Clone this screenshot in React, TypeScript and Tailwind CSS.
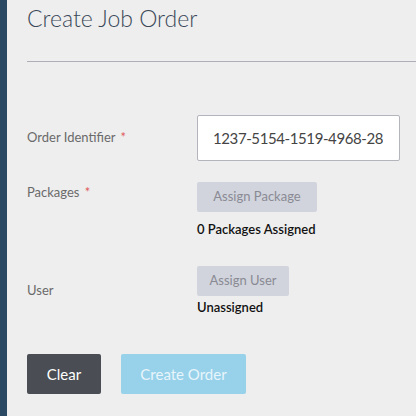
export default function App() {
  const font = { fontFamily: 'Lato, "Noto Sans", sans-serif' };
  return (
    <div className="flex w-[416px] h-[416px] bg-[#eeeeee] overflow-hidden" style={font}>
      <div className="w-[7px] shrink-0 bg-[#2a4861]" />
      <div className="flex-1 pl-[20px] flex flex-col">
        <h1 className="pt-[4px] text-[23px] leading-[28px] font-light text-[#3a4858]">Create Job Order</h1>
        <div className="mt-[29px] h-px bg-[#aeaeb6]" />
        <div className="mt-[53px] flex items-center">
          <div className="w-[170px] text-[13px] text-[#6a6a6a]">
            Order Identifier <span className="text-[#e05a5a] ml-[2px]">*</span>
          </div>
          <input
            readOnly
            value="1237-5154-1519-4968-2841"
            className="w-[203px] h-[46px] bg-white border border-[#b4b4bc] rounded-[2px] pl-[15px] pr-[16px] text-[15px] tracking-[-0.4px] text-[#444] outline-none"
            style={font}
          />
        </div>
        <div className="mt-[21px] flex items-start">
          <div className="w-[170px] text-[13px] leading-[20px] text-[#6a6a6a]">
            Packages <span className="text-[#e05a5a] ml-[2px]">*</span>
          </div>
          <div className="flex flex-col items-start">
            <button className="h-[30px] w-[120px] bg-[#d1d4dc] rounded-[2px] text-[13px] text-[#8a8a94]">Assign Package</button>
            <div className="mt-[8px] text-[13px] leading-[18px] font-semibold text-[#111]">0 Packages Assigned</div>
          </div>
        </div>
        <div className="mt-[28px] flex items-center">
          <div className="w-[170px] text-[13px] text-[#6a6a6a]">User</div>
          <div className="flex flex-col items-start">
            <button className="h-[30px] w-[92px] bg-[#d1d4dc] rounded-[2px] text-[13px] text-[#8a8a94]">Assign User</button>
            <div className="mt-[2px] text-[13px] leading-[18px] font-semibold text-[#111]">Unassigned</div>
          </div>
        </div>
        <div className="mt-[38px] flex gap-[20px]">
          <button className="h-[40px] w-[74px] bg-[#4a4d53] rounded-[2px] text-[15px] text-white">Clear</button>
          <button className="h-[40px] w-[125px] bg-[#97d1ea] rounded-[2px] text-[15px] text-[#e8f5fb]">Create Order</button>
        </div>
      </div>
    </div>
  );
}
